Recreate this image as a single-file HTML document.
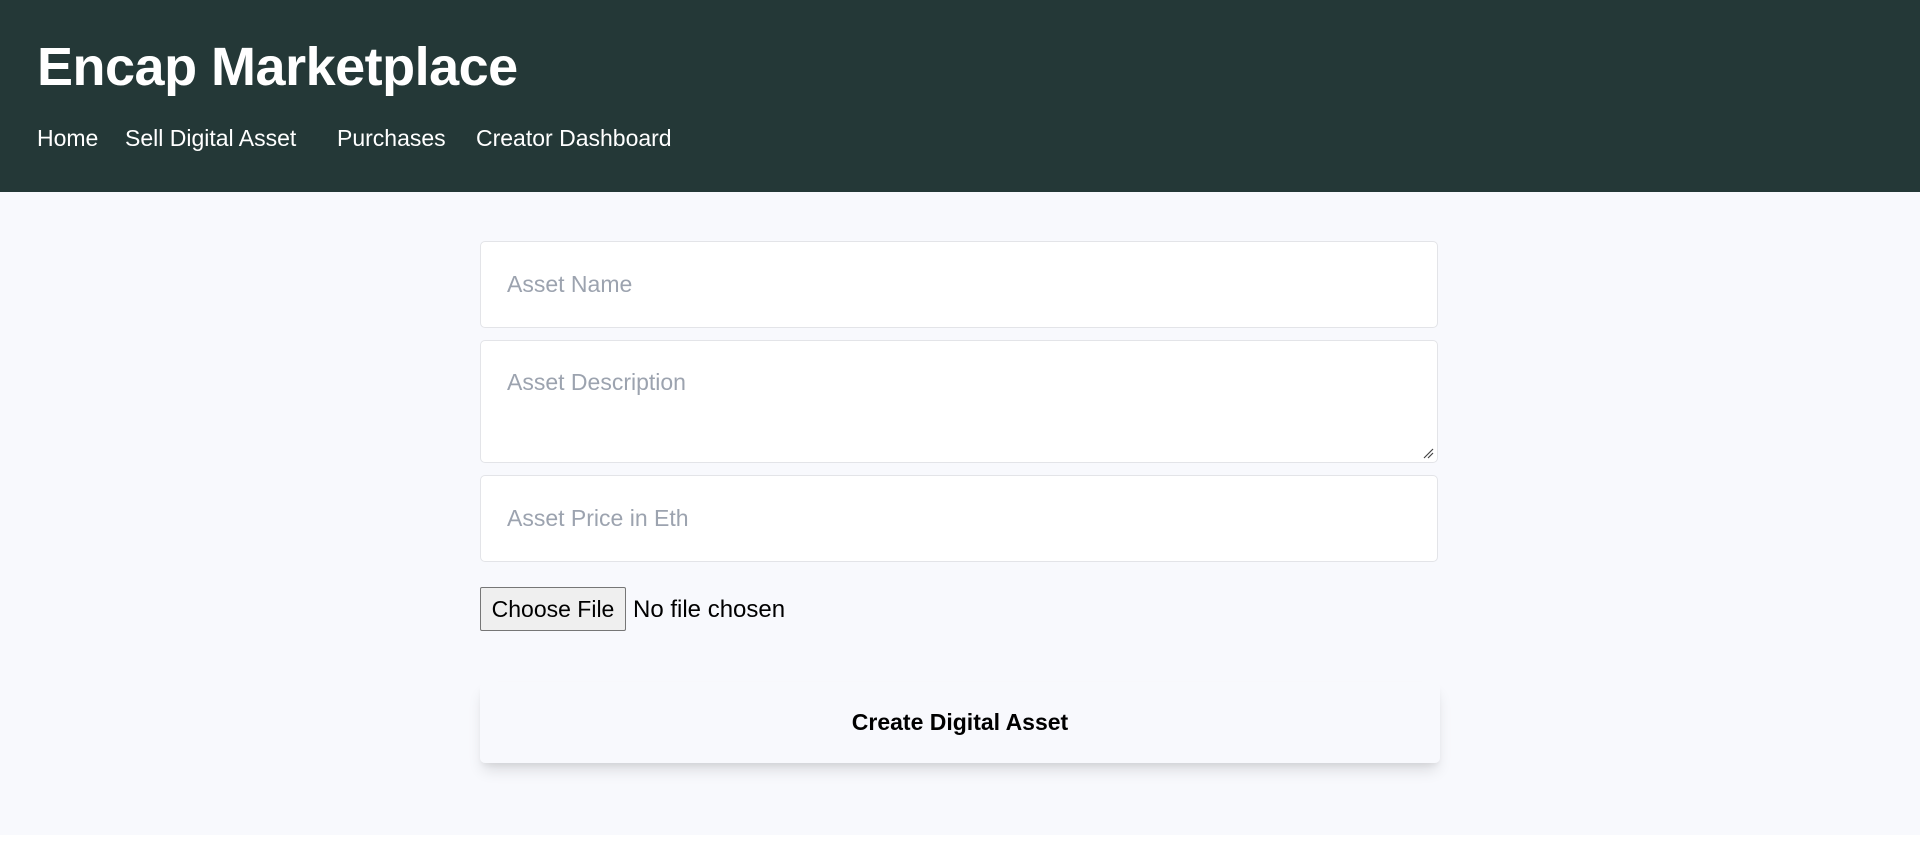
<!DOCTYPE html>
<html><head><meta charset="utf-8"><style>
html,body{margin:0;padding:0;background:#fff;width:1920px;height:862px;overflow:hidden;font-family:"Liberation Sans",sans-serif}
.hdr{position:absolute;left:0;top:0;width:1920px;height:192px;background:#243837;color:#fff}
.title{position:absolute;left:37px;top:34px;font-size:54px;font-weight:bold;letter-spacing:-0.5px;line-height:66px;white-space:nowrap}
.nav{position:absolute;top:124px;font-size:23px;line-height:28px;white-space:nowrap}
.main{position:absolute;left:0;top:192px;width:1920px;height:643px;background:#f8f9fd}
.inp{position:absolute;left:480px;width:958px;background:#fff;border:1px solid #e3e4e8;border-radius:5px;color:#9ca3af;font-size:23px;box-sizing:border-box;padding-left:26px}
.file{position:absolute;left:480px;top:587px;height:44px;width:146px;box-sizing:border-box;border:1px solid #767676;border-radius:2px;background:#efefef;font-size:23px;line-height:42px;text-align:center;color:#000}
.nf{position:absolute;left:633px;top:587px;line-height:46px;font-size:24px;color:#000}
.btn{position:absolute;left:480px;top:682px;width:960px;height:81px;background:#f8f9fd;border-radius:5px;box-shadow:0 10px 15px -3px rgba(0,0,0,.12),0 4px 6px -2px rgba(0,0,0,.06);font-weight:bold;font-size:23px;line-height:81px;text-align:center;color:#000}
</style></head><body>
<div class="hdr">
<div class="title">Encap Marketplace</div>
<div class="nav" style="left:37px">Home</div>
<div class="nav" style="left:125px">Sell Digital Asset</div>
<div class="nav" style="left:337px">Purchases</div>
<div class="nav" style="left:476px">Creator Dashboard</div>
</div>
<div class="main"></div>
<div class="inp" style="top:241px;height:87px;line-height:85px">Asset Name</div>
<div class="inp" style="top:340px;height:123px;padding-top:26px;line-height:30px">Asset Description
<svg style="position:absolute;right:3px;bottom:3px" width="12" height="12"><path d="M11 2L2 11M11 6L6 11" stroke="#444" stroke-width="1.2"/></svg></div>
<div class="inp" style="top:475px;height:87px;line-height:85px">Asset Price in Eth</div>
<div class="file">Choose File</div>
<div class="nf">No file chosen</div>
<div class="btn">Create Digital Asset</div>
</body></html>
